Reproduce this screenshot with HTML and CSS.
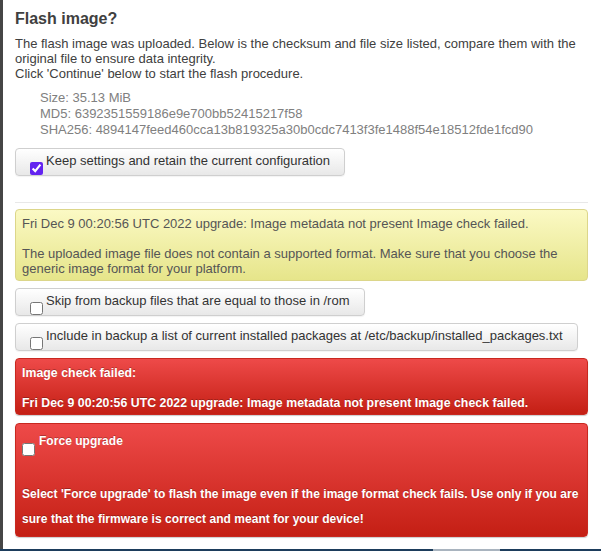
FILE: index.html
```html
<!DOCTYPE html>
<html>
<head>
<meta charset="utf-8">
<link rel="stylesheet" href="styles.css">
</head>
<body>
<div class="page">
  <div class="strip"></div>
  <div class="modal">
    <h4 class="title">Flash image?</h4>
    <p class="intro">The flash image was uploaded. Below is the checksum and file size listed, compare them with the original file to ensure data integrity.<br>Click 'Continue' below to start the flash procedure.</p>
    <ul class="sums">
      <li>Size: 35.13 MiB</li>
      <li>MD5: 6392351559186e9e700bb52415217f58</li>
      <li>SHA256: 4894147feed460cca13b819325a30b0cdc7413f3fe1488f54e18512fde1fcd90</li>
    </ul>
    <label class="btn"><input type="checkbox" class="chk purple" checked><span class="btn-text">Keep settings and retain the current configuration</span></label>
    <hr class="sep">
    <div class="alert-warn">Fri Dec 9 00:20:56 UTC 2022 upgrade: Image metadata not present Image check failed.<br><br>The uploaded image file does not contain a supported format. Make sure that you choose the generic image format for your platform.</div>
    <label class="btn"><input type="checkbox" class="chk"><span class="btn-text">Skip from backup files that are equal to those in /rom</span></label>
    <label class="btn"><input type="checkbox" class="chk"><span class="btn-text">Include in backup a list of current installed packages at /etc/backup/installed_packages.txt</span></label>
    <div class="alert-danger check">
      <div class="danger-line">Image check failed:</div>
      <div class="danger-line gap">Fri Dec 9 00:20:56 UTC 2022 upgrade: Image metadata not present Image check failed.</div>
    </div>
    <div class="alert-danger force">
      <label class="force-row"><input type="checkbox" class="chk force-chk"><span class="force-label">Force upgrade</span></label>
      <p class="force-text">Select 'Force upgrade' to flash the image even if the image format check fails. Use only if you are sure that the firmware is correct and meant for your device!</p>
    </div>
  </div>
</div>
<div class="bottom-bar">
  <div class="bar-navy"></div>
  <div class="bar-gray"></div>
  <div class="bar-navy rest"></div>
</div>
</body>
</html>
```
FILE: styles.css
```css
html, body {
  margin: 0;
  padding: 0;
}
body {
  background: #1d3d5c;
  font-family: "Liberation Sans", Arial, sans-serif;
  font-size: 13px;
  color: #404040;
  width: 601px;
  height: 551px;
  overflow: hidden;
}
.page {
  display: flex;
  height: 549px;
}
.strip {
  width: 3px;
  background: #464646;
  flex: none;
}
.modal {
  flex: 1;
  background: #fff;
  padding: 10px 13px 0 12px;
  display: flex;
  flex-direction: column;
  align-items: flex-start;
}
.title {
  margin: 0;
  font-size: 16px;
  line-height: 18px;
  font-weight: bold;
  color: #404040;
}
.intro {
  margin: 8px 0 0;
  line-height: 15px;
}
.sums {
  list-style: none;
  margin: 9px 0 0;
  padding: 0 0 0 25px;
  color: #808080;
  line-height: 16px;
}
.btn {
  display: inline-flex;
  align-items: flex-start;
  box-sizing: border-box;
  height: 28px;
  margin-top: 10px;
  padding: 0 14px;
  border: 1px solid #cfcfcf;
  border-radius: 4px;
  background: linear-gradient(#ffffff, #e8e8e8);
  box-shadow: 0 1px 1px rgba(0,0,0,0.05);
  color: #333;
  line-height: 15px;
}
.chk {
  width: 13px;
  height: 13px;
  margin: 13px 3px 0 0;
  flex: none;
}
.purple {
  accent-color: #6324f0;
}
.btn-text {
  margin-top: 4px;
  white-space: nowrap;
}
.sep {
  align-self: stretch;
  margin: 26px 0 0;
  border: 0;
  border-top: 1px solid #e8e8e8;
  height: 0;
}
.alert-warn + .btn,
.btn + .btn {
  margin-top: 7px;
}
.alert-warn {
  align-self: stretch;
  margin-top: 6px;
  padding: 6px 7px 4px 6px;
  border: 1px solid #dcd68a;
  border-radius: 4px;
  background: linear-gradient(#fbf9c4, #e6e58a);
  color: #555;
  font-size: 13px;
  line-height: 15px;
}
.alert-danger {
  align-self: stretch;
  margin-top: 7px;
  padding: 7px 7px 3px 6px;
  border: 1px solid #c8281f;
  border-radius: 4px;
  background: linear-gradient(#ee4a49, #c41f14);
  box-shadow: 0 1px 1px rgba(0,0,0,0.2);
  color: #fff;
  font-size: 12px;
  font-weight: bold;
  letter-spacing: 0.04px;
  line-height: 15px;
  text-shadow: 0 -1px 0 rgba(0,0,0,0.25);
}
.alert-danger.check {
  font-size: 12.3px;
}
.danger-line.gap {
  margin-top: 15px;
}
.alert-danger.force {
  margin-top: 8px;
  padding-top: 10px;
  padding-bottom: 4px;
}
.force-row {
  display: flex;
  align-items: flex-start;
}
.force-chk {
  margin: 9px 4px 0 0;
}
.force-label {
  display: block;
}
.force-text {
  margin: 26px 0 0;
  line-height: 25px;
}
.bottom-bar {
  display: flex;
  height: 2px;
}
.bar-navy {
  width: 433px;
  background: #1d3d5c;
}
.bar-gray {
  width: 67px;
  background: #a9b4bf;
}
.bar-navy.rest {
  flex: 1;
}
```
